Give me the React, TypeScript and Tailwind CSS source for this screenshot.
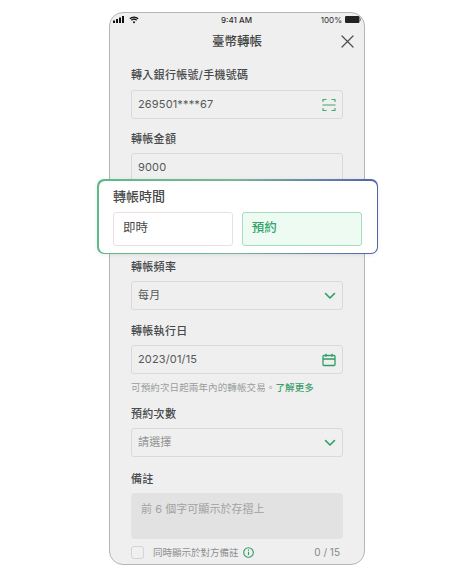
import React from "react";

const F = "font-['Inter','Noto_Sans_CJK_TC',sans-serif]";

function Chevron() {
  return (
    <svg width="12" height="8" viewBox="0 0 12 8" fill="none" stroke="#2f9e66" strokeWidth="1.6" strokeLinecap="round" strokeLinejoin="round">
      <path d="M1.5 1.5 6 6l4.5-4.5" />
    </svg>
  );
}

function Label({ children, className = "" }: { children: React.ReactNode; className?: string }) {
  return <div className={`text-[11px] leading-[16px] font-medium tracking-[0.3px] text-[#47494a] ${className}`}>{children}</div>;
}

function Field({ children, icon, muted }: { children: React.ReactNode; icon?: React.ReactNode; muted?: boolean }) {
  return (
    <div className={`h-[29px] rounded-[3px] border border-[#d8d9d9] bg-[#efefef] pl-[6px] pr-[6px] flex items-center justify-between text-[11px] tracking-[0.15px] ${muted ? "text-[#929594]" : "text-[#565958]"}`}>
      <span>{children}</span>
      {icon}
    </div>
  );
}

export default function App() {
  return (
    <div className={`relative w-[474px] h-[575px] bg-white overflow-hidden ${F}`}>
      <div className="absolute left-[109px] top-[12px] w-[256px] h-[553px] rounded-[14px] border border-[#b5b5b5] bg-[#efefef] flex flex-col">
        <div className="relative h-[13px] px-[3px] flex items-center justify-between text-[8px] text-[#2c2c2c]">
          <div className="flex items-center gap-[3px]">
            <svg width="13" height="7" viewBox="0 0 13 7" fill="#111">
              <rect x="0" y="4.5" width="2" height="2.5" />
              <rect x="3" y="3" width="2" height="4" />
              <rect x="6" y="1.5" width="2" height="5.5" />
              <rect x="9" y="0" width="2" height="7" />
            </svg>
            <svg width="10" height="8" viewBox="0 0 10 8" fill="none" stroke="#111" strokeWidth="1.3">
              <path d="M.8 2.8a6 6 0 0 1 8.4 0M2.3 4.3a3.9 3.9 0 0 1 5.4 0" />
              <circle cx="5" cy="6.3" r="1" fill="#111" stroke="none" />
            </svg>
          </div>
          <span className="absolute left-[111px] font-medium">9:41 AM</span>
          <div className="flex items-center gap-[3px]">
            <span>100%</span>
            <svg width="16" height="7" viewBox="0 0 16 7">
              <rect x="0" y="0" width="14.5" height="7" rx="1.2" fill="#222" />
              <rect x="15" y="2.2" width="1" height="2.6" fill="#888" />
            </svg>
          </div>
        </div>
        <div className="relative h-[30px] pt-[2px] flex items-center justify-center text-[12.5px] font-medium text-[#3f4442]">
          <span>臺幣轉帳</span>
          <svg className="absolute right-[10px] top-[9px]" width="13" height="13" viewBox="0 0 13 13" stroke="#4a4d4c" strokeWidth="1.2" strokeLinecap="round">
            <path d="M1 1l11 11M12 1 1 12" />
          </svg>
        </div>

        <div className="px-[21px] pt-[11px] flex flex-col">
          <Label>轉入銀行帳號/手機號碼</Label>
          <div className="mt-[7px]">
            <Field
              icon={
                <svg width="14" height="14" viewBox="0 0 14 14" fill="none" stroke="#3fa873" strokeWidth="1.1">
                  <path d="M1 4V1.5h3.5M9.5 1.5H13V4M1 10v2.5h3.5M9.5 12.5H13V10M0.5 7h13" />
                </svg>
              }
            >
              269501****67
            </Field>
          </div>
          <Label className="mt-[12px]">轉帳金額</Label>
          <div className="mt-[6px]">
            <Field>9000</Field>
          </div>
          <div className="h-[77px]" />
          <Label>轉帳頻率</Label>
          <div className="mt-[6px]">
            <Field icon={<Chevron />}>每月</Field>
          </div>
          <Label className="mt-[13px]">轉帳執行日</Label>
          <div className="mt-[6px]">
            <Field
              icon={
                <svg width="14" height="14" viewBox="0 0 14 14" fill="none" stroke="#2f9e66" strokeWidth="1.3">
                  <rect x="1" y="2.5" width="12" height="10" rx="1" />
                  <path d="M1 6h12M4 .8v3M10 .8v3" />
                </svg>
              }
            >
              2023/01/15
            </Field>
          </div>
          <div className="mt-[7px] text-[9.5px] leading-[13px] tracking-[0.13px] text-[#9a9d9c]">
            可預約次日起兩年內的轉帳交易。<span className="text-[#3b9e6c] font-medium">了解更多</span>
          </div>
          <Label className="mt-[12px]">預約次數</Label>
          <div className="mt-[6px]">
            <Field muted icon={<Chevron />}>請選擇</Field>
          </div>
          <Label className="mt-[14px]">備註</Label>
          <div className="mt-[6px] h-[46px] rounded-[4px] bg-[#e2e2e2] px-[10px] py-[9px] text-[11px] leading-[14px] text-[#a0a2a1] tracking-[0.05px]">
            前 6 個字可顯示於存摺上
          </div>
          <div className="mt-[7px] flex items-center text-[9.5px] leading-[13px] text-[#8d908f]">
            <div className="w-[13px] h-[13px] rounded-[3px] border border-[#d3d4d4] bg-[#f0f0f0] mr-[9px]" />
            <span>同時顯示於對方備註</span>
            <svg className="ml-[4px]" width="11" height="11" viewBox="0 0 11 11" fill="none" stroke="#2f9e66" strokeWidth="1.1">
              <circle cx="5.5" cy="5.5" r="4.8" />
              <path d="M5.5 4.8v3.2M5.5 2.6v1.1" />
            </svg>
            <span className="ml-auto mr-[3px] text-[10px] text-[#858887]">0 / 15</span>
          </div>
        </div>
      </div>

      <div className="absolute left-[97px] top-[179px] w-[281px] h-[75px] rounded-[7px] p-[1.5px] bg-linear-to-r from-[#5fb98a] via-[#78b598] to-[#5560ab] shadow-[0_1px_4px_rgba(0,0,0,0.08)]">
        <div className="w-full h-full rounded-[6px] bg-white pl-[14.5px] pr-[15px] pt-[6px]">
          <div className="text-[13px] leading-[18px] font-medium text-[#47494a]">轉帳時間</div>
          <div className="mt-[7px] flex gap-[9px]">
            <div className="w-[120px] h-[34px] rounded-[3px] border border-[#ecdfe3] bg-white pl-[9px] flex items-center text-[12.5px] text-[#4a4d4c]">即時</div>
            <div className="w-[120px] h-[34px] rounded-[3px] border border-[#a5dcc0] bg-[#eefbf3] pl-[9px] flex items-center text-[12.5px] font-medium text-[#32a56c]">預約</div>
          </div>
        </div>
      </div>
    </div>
  );
}
